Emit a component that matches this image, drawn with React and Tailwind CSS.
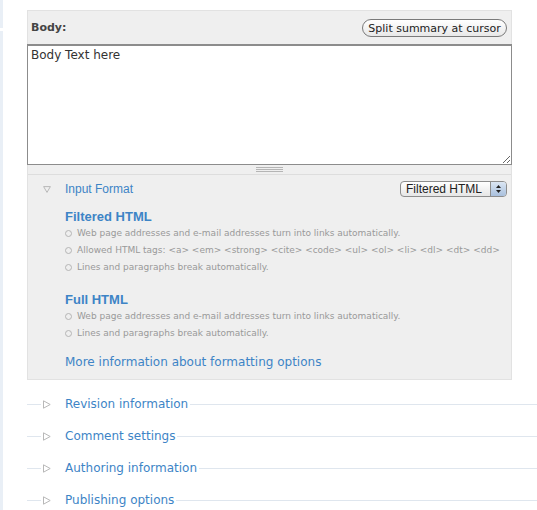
const blue = "text-[#3d84c6]";

function Bullet({ children }) {
  return (
    <li className="flex items-center h-[17px] text-[9px] text-[#999]">
      <span className="w-[7px] h-[7px] rounded-full border border-[#b5b5b5] mr-[5px] shrink-0" />
      {children}
    </li>
  );
}

function RightTriangle() {
  return (
    <svg width="8" height="9" viewBox="0 0 8 9" className="shrink-0">
      <path d="M0.5 0.8 L7.2 4.5 L0.5 8.2 Z" fill="none" stroke="#b8b8b8" strokeWidth="1" />
    </svg>
  );
}

function Collapsed({ label }) {
  return (
    <div className="flex items-center h-[32px] pl-[24px]">
      <div className="w-[14px] h-px bg-[#dfe6ee]" />
      <div className="ml-[2px]">
        <RightTriangle />
      </div>
      <span className={`ml-[14px] text-[12px] ${blue}`}>{label}</span>
      <div className="flex-1 h-px bg-[#dfe6ee] ml-[2px]" />
    </div>
  );
}

export default function App() {
  return (
    <div className="min-h-[510px] w-[537px] bg-white flex font-['DejaVu_Sans',sans-serif]">
      <div className="w-[3px] flex flex-col shrink-0">
        <div className="h-[28px] bg-[#e9eff6]" />
        <div className="flex-1 mt-[3px] bg-[#e9eff6]" />
      </div>
      <div className="flex-1 flex flex-col">
        <div className="ml-[24px] mt-[10px] w-[485px] bg-[#efefef] border border-[#e2e2e2] flex flex-col">
          <div className="flex items-center justify-between h-[33px] pl-[3px] pr-[4px] pt-[1px]">
            <span className="text-[11px] font-bold text-[#444]">Body:</span>
            <button className="h-[18px] w-[145px] rounded-full border border-[#7a7a7a] bg-gradient-to-b from-white to-[#e8e8e8] text-[11px] text-[#222] leading-none">
              Split summary at cursor
            </button>
          </div>
          <textarea
            className="-ml-px w-[485px] h-[121px] bg-white border border-[#8c8c8c] border-t-2 px-[3px] py-0 text-[12px] text-[#333] outline-none resize-y font-['DejaVu_Sans',sans-serif]"
            defaultValue="Body Text here"
          />
          <div className="h-[10px] flex flex-col items-center justify-center gap-[1px] border-b border-[#dddddd]">
            <div className="w-[27px] h-px bg-[#b5b5b5]" />
            <div className="w-[27px] h-px bg-[#b5b5b5]" />
            <div className="w-[27px] h-px bg-[#b5b5b5]" />
          </div>
          <div className="flex items-center justify-between h-[27px] pt-[1px] pl-[15px] pr-[4px]">
            <div className="flex items-center">
              <svg width="8" height="7" viewBox="0 0 8 7">
                <path d="M0.6 0.6 L7.4 0.6 L4 6.4 Z" fill="none" stroke="#b8b8b8" strokeWidth="1" />
              </svg>
              <span className={`ml-[14px] text-[12px] font-['Liberation_Sans',sans-serif] ${blue}`}>Input Format</span>
            </div>
            <div className="flex items-stretch h-[16px] w-[107px] rounded-[4px] border border-[#8d8d8d] bg-gradient-to-b from-white to-[#e6e6e6] overflow-hidden">
              <span className="flex-1 pl-[5px] text-[12px] leading-[14px] text-[#222] font-['Liberation_Sans',sans-serif]">Filtered HTML</span>
              <span className="w-[16px] bg-gradient-to-b from-[#dbe6f3] to-[#a9c0dd] border-l border-[#8d8d8d] flex flex-col items-center justify-center gap-[2px]">
                <svg width="5" height="3" viewBox="0 0 5 3"><path d="M2.5 0 L5 3 L0 3 Z" fill="#222" /></svg>
                <svg width="5" height="3" viewBox="0 0 5 3"><path d="M0 0 L5 0 L2.5 3 Z" fill="#222" /></svg>
              </span>
            </div>
          </div>
          <div className="pl-[37px] pb-[8px]">
            <h3 className={`mt-[6px] h-[17px] leading-[17px] text-[13px] font-bold font-['Liberation_Sans',sans-serif] ${blue}`}>Filtered HTML</h3>
            <ul>
              <Bullet>Web page addresses and e-mail addresses turn into links automatically.</Bullet>
              <Bullet>Allowed HTML tags: &lt;a&gt; &lt;em&gt; &lt;strong&gt; &lt;cite&gt; &lt;code&gt; &lt;ul&gt; &lt;ol&gt; &lt;li&gt; &lt;dl&gt; &lt;dt&gt; &lt;dd&gt;</Bullet>
              <Bullet>Lines and paragraphs break automatically.</Bullet>
            </ul>
            <h3 className={`mt-[15px] h-[17px] leading-[17px] text-[13px] font-bold font-['Liberation_Sans',sans-serif] ${blue}`}>Full HTML</h3>
            <ul>
              <Bullet>Web page addresses and e-mail addresses turn into links automatically.</Bullet>
              <Bullet>Lines and paragraphs break automatically.</Bullet>
            </ul>
            <p className={`mt-[11px] h-[18px] leading-[18px] text-[12px] ${blue}`}>More information about formatting options</p>
          </div>
        </div>
        <div className="mt-[8px]">
          <Collapsed label="Revision information" />
          <Collapsed label="Comment settings" />
          <Collapsed label="Authoring information" />
          <Collapsed label="Publishing options" />
        </div>
      </div>
    </div>
  );
}
